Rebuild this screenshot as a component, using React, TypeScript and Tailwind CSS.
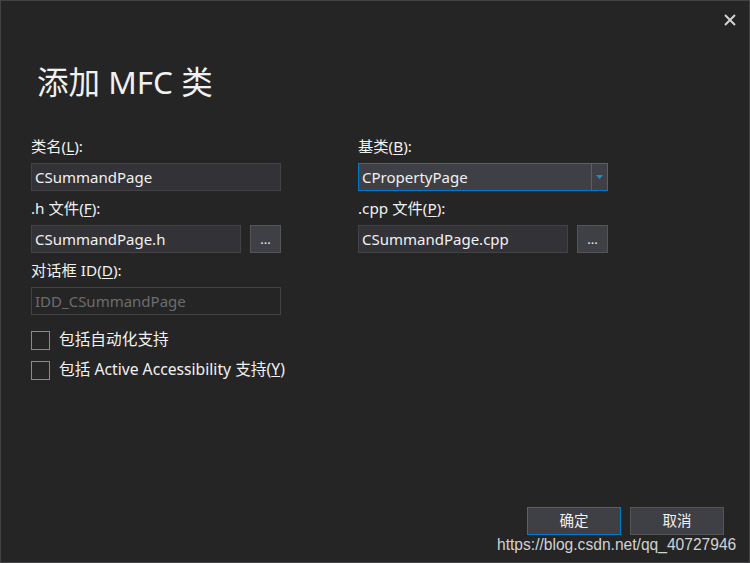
import React from 'react';

const font = { fontFamily: '"Noto Sans", "Noto Sans CJK SC", sans-serif' };

function Label({ text, k, rest = '):' }: { text: string; k: string; rest?: string }) {
  return (
    <div className="h-[34px] flex items-center text-[15.3px] text-[#f1f1f1]">
      <span>{text}(</span>
      <u className="underline-offset-2">{k}</u>
      <span>{rest}</span>
    </div>
  );
}

function TextBox({ value, className = '', disabled = false }: { value: string; className?: string; disabled?: boolean }) {
  return (
    <div
      className={`h-[28px] flex items-center px-[3px] border text-[15px] ${
        disabled ? 'bg-[#252526] border-[#434346] text-[#6d6d6d]' : 'bg-[#333337] border-[#434346] text-[#f1f1f1]'
      } ${className}`}
    >
      {value}
    </div>
  );
}

function Browse() {
  return (
    <div className="w-[31px] h-[28px] bg-[#3f3f46] border border-[#555558] flex items-end justify-center pb-[6px] text-[#f1f1f1] text-[13px] leading-none">
      ...
    </div>
  );
}

function Check({ children }: { children: React.ReactNode }) {
  return (
    <div className="h-[30px] flex items-center gap-[9px]">
      <div className="w-[19px] h-[19px] border border-[#8a8a8a] bg-[#252526]" />
      <span className="text-[15.7px] text-[#f1f1f1]">{children}</span>
    </div>
  );
}

export default function App() {
  return (
    <div style={font} className="relative w-[750px] h-[563px] bg-[#252526] border border-[#434346] overflow-hidden flex flex-col">
      <div className="flex justify-end pt-[13px] pr-[13px]">
        <svg width="12" height="12" viewBox="0 0 12 12">
          <path d="M1 1 L11 11 M11 1 L1 11" stroke="#d4d4d4" strokeWidth="2" />
        </svg>
      </div>
      <div className="pl-[36px] mt-[36px] text-[31.5px] leading-[40px] text-[#f1f1f1]">添加 MFC 类</div>

      <div className="pl-[30px] mt-[27px] grid grid-cols-[250px_250px] gap-x-[77px]">
        <div className="flex flex-col">
          <Label text="类名" k="L" />
          <TextBox value="CSummandPage" />
          <Label text=".h 文件" k="F" />
          <div className="flex gap-[9px]">
            <TextBox value="CSummandPage.h" className="w-[211px]" />
            <Browse />
          </div>
          <Label text="对话框 ID" k="D" />
          <TextBox value="IDD_CSummandPage" disabled />
        </div>
        <div className="flex flex-col">
          <Label text="基类" k="B" />
          <div className="h-[28px] flex border border-[#007acc] bg-[#3f3f46] text-[15px] text-[#f1f1f1]">
            <div className="flex-1 flex items-center px-[3px] border-r border-[#007acc]">CPropertyPage</div>
            <div className="w-[15px] flex items-center justify-center">
              <svg width="7" height="4" viewBox="0 0 7 4">
                <path d="M0 0 H7 L3.5 4 Z" fill="#1f8ad2" />
              </svg>
            </div>
          </div>
          <Label text=".cpp 文件" k="P" />
          <div className="flex gap-[9px]">
            <TextBox value="CSummandPage.cpp" className="w-[211px]" />
            <Browse />
          </div>
        </div>
      </div>

      <div className="pl-[30px] mt-[10px] flex flex-col">
        <Check>包括自动化支持</Check>
        <Check>
          包括 Active Accessibility 支持(<u>Y</u>)
        </Check>
      </div>

      <div className="mt-auto mb-[27px] pr-[25px] flex justify-end gap-[9px]">
        <div className="w-[94px] h-[28px] flex items-center justify-center bg-[#3f3f46] border border-[#007acc] text-[14.5px] text-[#f1f1f1]">
          确定
        </div>
        <div className="w-[94px] h-[28px] flex items-center justify-center bg-[#3f3f46] border border-[#555558] text-[14.5px] text-[#f1f1f1]">
          取消
        </div>
      </div>

      <div
        className="absolute left-[496px] top-[532px] text-[15.6px] text-[#d2d2d2]"
        style={{ fontFamily: '"Liberation Sans", Arial, sans-serif' }}
      >
        https://blog.csdn.net/qq_40727946
      </div>
    </div>
  );
}
